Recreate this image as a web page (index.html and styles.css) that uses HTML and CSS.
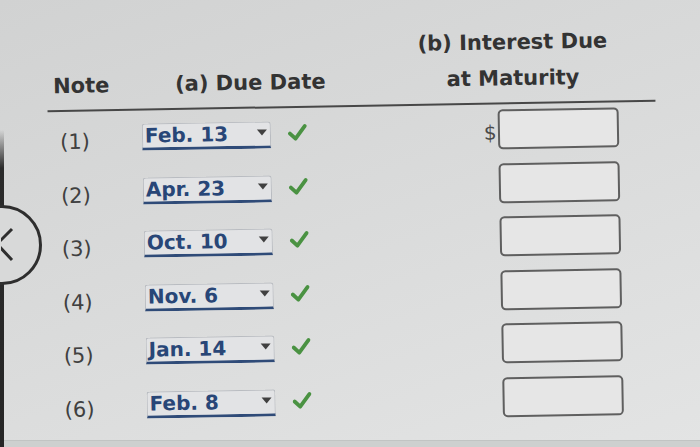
FILE: index.html
```html
<!DOCTYPE html>
<html lang="en">
<head>
<meta charset="utf-8">
<title>Notes</title>
<link rel="stylesheet" href="styles.css">
</head>
<body>
<div class="screen">
  <main class="sheet">
    <div class="row head">
      <div class="h-note">Note</div>
      <div class="h-date">(a) Due Date</div>
      <div class="h-int">(b) Interest Due<br>at Maturity</div>
    </div>

    <div class="row">
      <div class="num">(1)</div>
      <div class="date">
        <div class="select"><span class="val">Feb. 13</span><i class="caret"></i></div>
        <svg class="check" viewBox="0 0 19 17" width="19" height="17"><path d="M2 9.5 L7.5 14.8 L17 2.2"/></svg>
      </div>
      <div class="amt"><span class="cur">$</span><div class="input"></div></div>
    </div>

    <div class="row">
      <div class="num">(2)</div>
      <div class="date">
        <div class="select"><span class="val">Apr. 23</span><i class="caret"></i></div>
        <svg class="check" viewBox="0 0 19 17" width="19" height="17"><path d="M2 9.5 L7.5 14.8 L17 2.2"/></svg>
      </div>
      <div class="amt"><span class="cur"></span><div class="input"></div></div>
    </div>

    <div class="row">
      <div class="num">(3)</div>
      <div class="date">
        <div class="select"><span class="val">Oct. 10</span><i class="caret"></i></div>
        <svg class="check" viewBox="0 0 19 17" width="19" height="17"><path d="M2 9.5 L7.5 14.8 L17 2.2"/></svg>
      </div>
      <div class="amt"><span class="cur"></span><div class="input"></div></div>
    </div>

    <div class="row">
      <div class="num">(4)</div>
      <div class="date">
        <div class="select"><span class="val">Nov. 6</span><i class="caret"></i></div>
        <svg class="check" viewBox="0 0 19 17" width="19" height="17"><path d="M2 9.5 L7.5 14.8 L17 2.2"/></svg>
      </div>
      <div class="amt"><span class="cur"></span><div class="input"></div></div>
    </div>

    <div class="row">
      <div class="num">(5)</div>
      <div class="date">
        <div class="select"><span class="val">Jan. 14</span><i class="caret"></i></div>
        <svg class="check" viewBox="0 0 19 17" width="19" height="17"><path d="M2 9.5 L7.5 14.8 L17 2.2"/></svg>
      </div>
      <div class="amt"><span class="cur"></span><div class="input"></div></div>
    </div>

    <div class="row">
      <div class="num">(6)</div>
      <div class="date">
        <div class="select"><span class="val">Feb. 8</span><i class="caret"></i></div>
        <svg class="check" viewBox="0 0 19 17" width="19" height="17"><path d="M2 9.5 L7.5 14.8 L17 2.2"/></svg>
      </div>
      <div class="amt"><span class="cur"></span><div class="input"></div></div>
    </div>
  </main>

  <div class="base"></div>

  <div class="edge"></div>
  <div class="prev">
    <svg class="chev" viewBox="0 0 14 40" width="14" height="40"><path d="M11 4 L-4 19 L11 35"/></svg>
  </div>
</div>
</body>
</html>
```

FILE: styles.css
```css
html, body {
  margin: 0;
  padding: 0;
}

body {
  width: 700px;
  height: 447px;
  overflow: hidden;
  font-family: "DejaVu Sans", Verdana, sans-serif;
  background: #dadbdb;
}

.screen {
  position: relative;
  width: 700px;
  height: 447px;
  display: flex;
  flex-direction: column;
  background: linear-gradient(160deg, #d1d2d2 0%, #d9dada 45%, #e3e4e4 100%);
  overflow: hidden;
}

.sheet {
  flex: 1;
  padding: 27px 0 0 50px;
  transform: rotate(-1deg);
  transform-origin: 350px 250px;
}

.row {
  display: grid;
  grid-template-columns: 94px 256px 258px;
  width: 608px;
  height: 53.5px;
  align-items: center;
}

.row.head {
  height: auto;
  align-items: end;
  line-height: 36px;
  font-size: 21px;
  font-weight: bold;
  color: #333333;
  padding-bottom: 6px;
  border-bottom: 2px solid #474747;
}

.h-note {
  padding-left: 6px;
}

.h-date {
  padding-left: 34px;
}

.h-int {
  text-align: center;
  padding-right: 26px;
}

.num {
  padding-left: 12px;
  padding-top: 7px;
  font-size: 21px;
  color: #404040;
}

.date {
  display: flex;
  align-items: center;
}

.select {
  box-sizing: border-box;
  width: 129px;
  height: 27px;
  display: flex;
  align-items: center;
  justify-content: space-between;
  padding: 0 3px 0 2px;
  background: #e2e3e5;
  border: 1px solid #b9bcc1;
  border-bottom: 3px solid #2f4b78;
  border-radius: 3px 3px 0 0;
}

.val {
  font-size: 20px;
  font-weight: bold;
  line-height: 23px;
  color: #284677;
}

.caret {
  width: 0;
  height: 0;
  margin-top: -3px;
  border-left: 5px solid transparent;
  border-right: 5px solid transparent;
  border-top: 6px solid #404040;
}

.check {
  margin-left: 17px;
  margin-top: -4px;
  fill: none;
  stroke: #4a9242;
  stroke-width: 3.8;
  stroke-linecap: round;
  stroke-linejoin: round;
}

.amt {
  display: flex;
  align-items: center;
  padding-left: 86px;
}

.cur {
  width: 14px;
  font-size: 20px;
  color: #4a4a4a;
  padding-top: 3px;
}

.input {
  box-sizing: border-box;
  width: 121px;
  height: 40px;
  margin-top: -3px;
  border: 2px solid #5f5f5f;
  border-radius: 5px;
  background: #e6e6e6;
}

.base {
  height: 6px;
  background: #cdd0cf;
  border-top: 1px solid #c1c4c3;
}

.edge {
  position: absolute;
  left: 0;
  top: 130px;
  bottom: 0;
  width: 4px;
  background: linear-gradient(180deg, rgba(40,40,40,0) 0%, #2b2b2b 12%, #262626 100%);
}

.prev {
  position: absolute;
  left: -38px;
  top: 205px;
  width: 80px;
  height: 80px;
  box-sizing: border-box;
  border: 3px solid #2e2e2e;
  border-radius: 50%;
  background: #d8d9d9;
}

.chev {
  position: absolute;
  left: 36px;
  top: 17px;
  fill: none;
  stroke: #2e2e2e;
  stroke-width: 3;
}
```
